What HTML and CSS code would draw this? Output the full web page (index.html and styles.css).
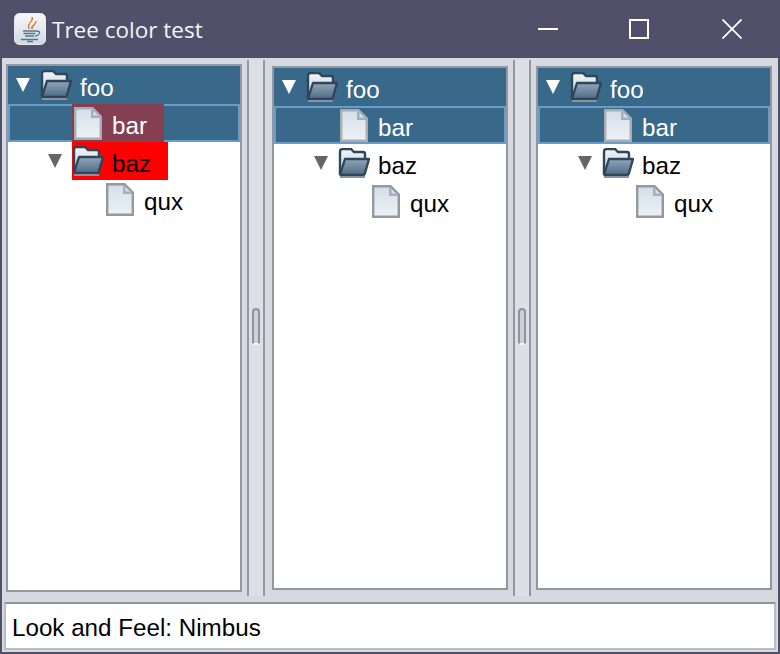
FILE: index.html
```html
<!DOCTYPE html>
<html lang="en">
<head>
    <meta charset="UTF-8">
    <title>Tree color test</title>
    <link rel="stylesheet" href="styles.css">
</head>
<body>
    <!-- Shared icons -->
    <svg class="defs" width="0" height="0">
        <defs>
            <linearGradient id="folder-back" x1="0" y1="0" x2="0" y2="1">
                <stop offset="0" stop-color="#f1f4f8"/>
                <stop offset="1" stop-color="#c4cfdb"/>
            </linearGradient>
            <linearGradient id="folder-front" x1="0" y1="0" x2="0" y2="1">
                <stop offset="0" stop-color="#93a6b9"/>
                <stop offset="1" stop-color="#4f6a86"/>
            </linearGradient>
            <linearGradient id="file-face" x1="0" y1="0" x2="0" y2="1">
                <stop offset="0" stop-color="#d3deE9"/>
                <stop offset="1" stop-color="#eef2f6"/>
            </linearGradient>
            <linearGradient id="java-bg" x1="0" y1="0" x2="0" y2="1">
                <stop offset="0" stop-color="#f8f8f8"/>
                <stop offset="1" stop-color="#cfd9e2"/>
            </linearGradient>
            <symbol id="folder" viewBox="0 0 32 30">
                <path class="folder-back" d="M2 26V4Q2 1 5 1H13L16 4H25Q27 4 27 6V12H9L5 26Z" fill="url(#folder-back)" stroke-width="2.400"/>
                <path d="M7 11H31L27 25Q26.500 27 25 27H3Q2 27 2.500 25Z" fill="url(#folder-front)" stroke="#2f4559" stroke-width="2.400" stroke-linejoin="round"/>
                <path d="M2 29H27" stroke="#8b93a0" stroke-width="2"/>
            </symbol>
            <symbol id="file" viewBox="0 0 28 33">
                <path d="M1.200 1.200H18.500L26.800 9.500V31.800H1.200Z" fill="url(#file-face)" stroke="currentColor" stroke-width="2.400"/>
                <path class="file-shine" d="M2 2H17V4H4V31H2Z"/>
                <path d="M17 3V11H26V8.500H19.500V3Z" fill="#9fb1c4"/>
            </symbol>
        </defs>
    </svg>

    <div class="window">
        <div class="titlebar">
            <svg class="app-icon" viewBox="0 0 32 32">
                <rect x="0.500" y="0.500" width="31" height="31" rx="5" fill="url(#java-bg)" stroke="#e6eaee"/>
                <path d="M18 4C21 8 12 10 15 16C13 10 19 9 18 4ZM22 8C23 11 16 12 18 16C18 13 22 12 22 8Z" fill="#e8742a" stroke="#e8742a"/>
                <path d="M9 18H22M9.500 20.500H21.500M11 23H20M7 26.500H24M13 28.500H19" fill="none" stroke="#4f7a96" stroke-width="1.600"/>
                <path d="M22 18Q27 18 25 21Q24 23 21 23" fill="none" stroke="#4f7a96" stroke-width="1.300"/>
            </svg>
            <span class="title">Tree color test</span>
            <div class="controls">
                <button class="control">
                    <svg viewBox="0 0 20 20"><path d="M0 10H20" stroke="#fff" stroke-width="2"/></svg>
                </button>
                <button class="control">
                    <svg viewBox="0 0 20 20"><rect x="1" y="1" width="18" height="18" fill="none" stroke="#fff" stroke-width="2"/></svg>
                </button>
                <button class="control">
                    <svg viewBox="0 0 20 20"><path d="M0.500 0.500L19.500 19.500M19.500 0.500L0.500 19.500" stroke="#fff" stroke-width="1.800"/></svg>
                </button>
            </div>
        </div>

        <div class="main">
            <!-- Left tree: cell renderer paints its own backgrounds -->
            <div class="pane">
                <div class="row selected">
                    <span class="slot"><i class="arrow"></i></span>
                    <span class="cell"><svg class="icon-folder"><use href="#folder"/></svg><span class="label">foo</span></span>
                </div>
                <div class="row selected focused level-2">
                    <span class="slot"></span>
                    <span class="cell cell-maroon"><svg class="icon-file"><use href="#file"/></svg><span class="label">bar</span></span>
                </div>
                <div class="row level-2">
                    <span class="slot"><i class="arrow"></i></span>
                    <span class="cell cell-red"><svg class="icon-folder"><use href="#folder"/></svg><span class="label">baz</span></span>
                </div>
                <div class="row level-3">
                    <span class="slot"></span>
                    <span class="cell"><svg class="icon-file"><use href="#file"/></svg><span class="label">qux</span></span>
                </div>
            </div>

            <div class="divider"><div class="grip"></div></div>

            <div class="pane inner">
                <div class="row selected">
                    <span class="slot"><i class="arrow"></i></span>
                    <span class="cell"><svg class="icon-folder"><use href="#folder"/></svg><span class="label">foo</span></span>
                </div>
                <div class="row selected focused level-2">
                    <span class="slot"></span>
                    <span class="cell"><svg class="icon-file"><use href="#file"/></svg><span class="label">bar</span></span>
                </div>
                <div class="row level-2">
                    <span class="slot"><i class="arrow"></i></span>
                    <span class="cell"><svg class="icon-folder"><use href="#folder"/></svg><span class="label">baz</span></span>
                </div>
                <div class="row level-3">
                    <span class="slot"></span>
                    <span class="cell"><svg class="icon-file"><use href="#file"/></svg><span class="label">qux</span></span>
                </div>
            </div>

            <div class="divider narrow"><div class="grip"></div></div>

            <div class="pane inner">
                <div class="row selected">
                    <span class="slot"><i class="arrow"></i></span>
                    <span class="cell"><svg class="icon-folder"><use href="#folder"/></svg><span class="label">foo</span></span>
                </div>
                <div class="row selected focused level-2">
                    <span class="slot"></span>
                    <span class="cell"><svg class="icon-file"><use href="#file"/></svg><span class="label">bar</span></span>
                </div>
                <div class="row level-2">
                    <span class="slot"><i class="arrow"></i></span>
                    <span class="cell"><svg class="icon-folder"><use href="#folder"/></svg><span class="label">baz</span></span>
                </div>
                <div class="row level-3">
                    <span class="slot"></span>
                    <span class="cell"><svg class="icon-file"><use href="#file"/></svg><span class="label">qux</span></span>
                </div>
            </div>
        </div>

        <div class="status">Look and Feel: Nimbus</div>
    </div>
</body>
</html>
```

FILE: styles.css
```css
body {
    margin: 0;
    font-family: "Liberation Sans", Arial, sans-serif;
}
.defs {
    position: absolute;
}
.window {
    width: 780px;
    height: 654px;
    box-sizing: border-box;
    display: flex;
    flex-direction: column;
    background-color: #d6d9df;
    border: 2px solid #50506b;
    border-top: 0;
}
.titlebar {
    height: 58px;
    flex-shrink: 0;
    display: flex;
    align-items: center;
    margin: 0 -2px;
    padding-left: 14px;
    background-color: #50506b;
    color: #fff;
}
.app-icon {
    width: 32px;
    height: 32px;
}
.title {
    margin-left: 6px;
    font-family: "Open Sans", sans-serif;
    font-size: 22.5px;
    color: #f2f4f8;
}
.controls {
    display: flex;
    margin-left: auto;
    margin-right: 2px;
}
.control {
    width: 92px;
    height: 58px;
    padding: 0;
    border: 0;
    background: none;
    display: flex;
    align-items: center;
    justify-content: center;
}
.control svg {
    width: 20px;
    height: 20px;
}
.control:nth-child(2) svg {
    margin-right: 2px;
}
.main {
    height: 536px;
    margin-top: 2px;
    padding: 0 4px;
    display: flex;
}
.pane {
    width: 232px;
    flex-shrink: 0;
    margin: 4px 0;
    border: 2px solid #9297a1;
    background-color: #fff;
    overflow: hidden;
}
.pane.inner {
    margin: 6px 0;
}
.divider {
    width: 14px;
    margin: 0 7px 0 5px;
    flex-shrink: 0;
    display: flex;
    align-items: center;
    justify-content: center;
    border-left: 2px solid #9297a1;
    border-right: 2px solid #9297a1;
    background-color: #dcdfe4;
}
.divider.narrow {
    margin: 0 5px;
}
.grip {
    width: 4px;
    height: 33px;
    margin-bottom: 3px;
    border: 2px solid #8f939d;
    border-bottom-color: #f8f9fa;
    border-radius: 4px;
    background-color: #cdd0d7;
}
.row {
    height: 38px;
    display: flex;
    box-sizing: border-box;
    position: relative;
    color: #000;
}
.row.level-2 {
    padding-left: 32px;
}
.row.level-3 {
    padding-left: 64px;
}
.row.selected {
    background-color: #39698a;
    color: #fff;
}
.row.focused::after {
    content: "";
    position: absolute;
    top: 0;
    left: 0;
    right: 0;
    bottom: 0;
    border: 2px solid #6b9bc9;
}
.slot {
    width: 32px;
    flex-shrink: 0;
    display: flex;
    align-items: center;
    padding-left: 8px;
    box-sizing: border-box;
}
.arrow {
    width: 0;
    height: 0;
    border-left: 7px solid transparent;
    border-right: 7px solid transparent;
    border-top: 14px solid #666;
}
.selected .arrow {
    border-top-color: #fff;
}
.cell {
    height: 38px;
    display: flex;
    align-items: center;
    padding-right: 17px;
    position: relative;
    z-index: 1;
}
.cell-maroon {
    background-color: #843f52;
}
.cell-red {
    background-color: #ff0000;
}
.icon-folder {
    width: 32px;
    height: 30px;
    margin-right: 8px;
}
.folder-back {
    stroke: #2f4559;
}
.selected .folder-back {
    stroke: #c3ccd6;
}
.icon-file {
    width: 28px;
    height: 33px;
    margin-left: 2px;
    margin-right: 10px;
    color: #94989f;
}
.selected .icon-file {
    color: #a9acb0;
}
.file-shine {
    fill: none;
}
.selected .file-shine {
    fill: #fff;
}
.label {
    padding-top: 6px;
    font-size: 24.2px;
}
.status {
    height: 48px;
    box-sizing: border-box;
    margin: 6px 2px 0;
    padding: 4px 0 0 6px;
    display: flex;
    align-items: center;
    border: 2px solid #b9bcc3;
    border-top-color: #8f939c;
    background-color: #fff;
    font-size: 24.2px;
    color: #000;
}
```
